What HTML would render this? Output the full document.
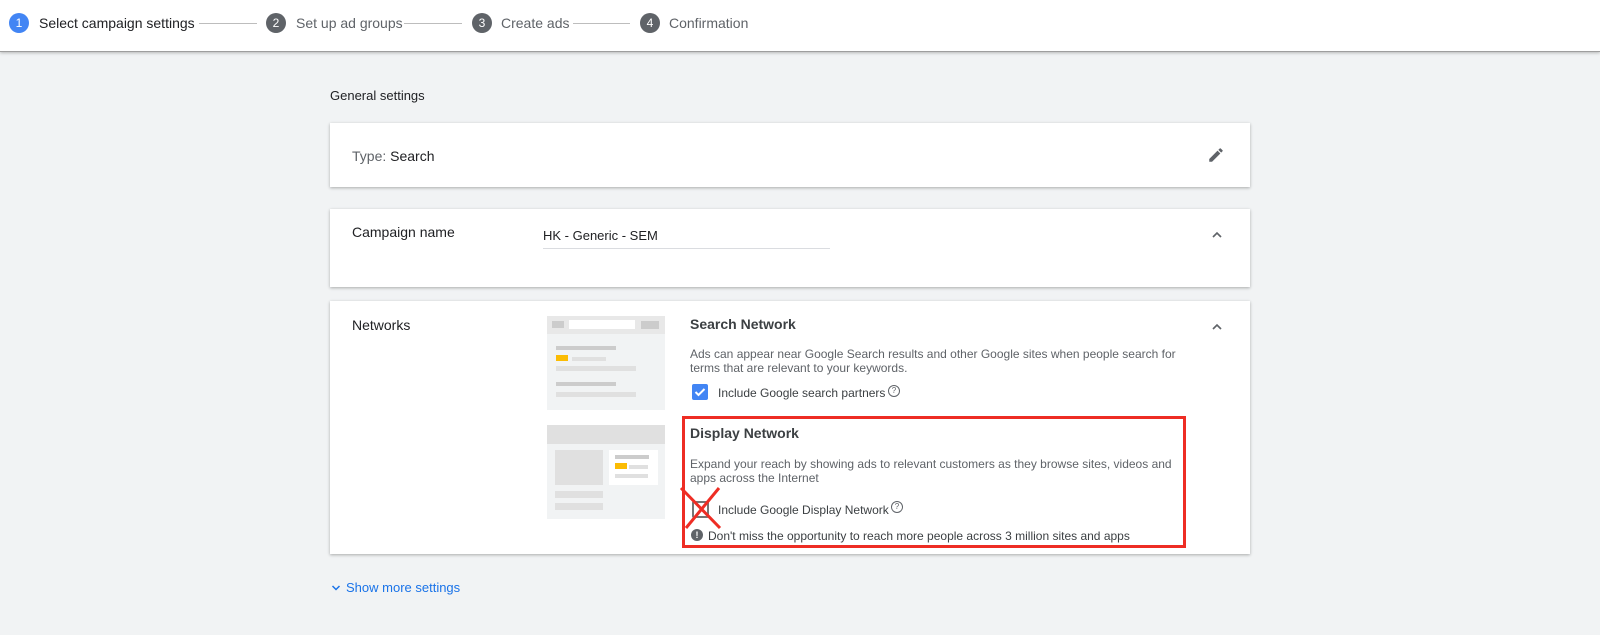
<!DOCTYPE html>
<html><head><style>
body{margin:0;width:1600px;height:635px;background:#f1f3f4;font-family:"Liberation Sans",Arial,sans-serif;position:relative;overflow:hidden;color:#202124}
.abs{position:absolute}
.hdr{left:0;top:0;width:1600px;height:51px;background:#fff;border-bottom:1px solid #9e9e9e;box-shadow:0 1px 3px rgba(0,0,0,.25)}
.num{width:20px;height:20px;border-radius:50%;color:#fff;font-size:12px;text-align:center;line-height:20px;top:13px;background:#5f6368}
.st{top:15px;font-size:14px;color:#5f6368}
.ln{top:23px;height:1px;background:#bdbdbd}
.card{left:330px;width:920px;background:#fff;box-shadow:0 1px 3px rgba(0,0,0,.3)}
.t14{font-size:14px}
.g{background:#e0e0e0}
.q{width:10px;height:10px;border:1px solid #5f6368;border-radius:50%;font-size:8px;line-height:10px;text-align:center;color:#5f6368}
</style></head><body>
<div class="abs hdr"></div>
<div class="abs num" style="left:9px;background:#4285f4">1</div>
<div class="abs st" style="left:39px;color:#202124">Select campaign settings</div>
<div class="abs ln" style="left:199px;width:58px"></div>
<div class="abs num" style="left:266px">2</div>
<div class="abs st" style="left:296px">Set up ad groups</div>
<div class="abs ln" style="left:404px;width:58px"></div>
<div class="abs num" style="left:472px">3</div>
<div class="abs st" style="left:501px">Create ads</div>
<div class="abs ln" style="left:573px;width:57px"></div>
<div class="abs num" style="left:640px">4</div>
<div class="abs st" style="left:669px">Confirmation</div>

<div class="abs t14" style="left:330px;top:88px;font-size:13px;color:#202124">General settings</div>

<div class="abs card" style="top:123px;height:64px"></div>
<div class="abs t14" style="left:352px;top:148px;color:#5f6368">Type: <span style="color:#202124">Search</span></div>
<svg class="abs" style="left:1207px;top:146px" width="18" height="18" viewBox="0 0 24 24"><path fill="#5f6368" d="M3 17.25V21h3.75L17.81 9.94l-3.75-3.75L3 17.25zM20.71 7.04a1 1 0 000-1.41l-2.34-2.34a1 1 0 00-1.41 0l-1.83 1.83 3.75 3.75 1.83-1.83z"/></svg>

<div class="abs card" style="top:209px;height:78px"></div>
<div class="abs t14" style="left:352px;top:224px">Campaign name</div>
<div class="abs" style="left:543px;top:228px;font-size:13px">HK - Generic - SEM</div>
<div class="abs" style="left:543px;top:248px;width:287px;height:1px;background:#dadce0"></div>
<svg class="abs" style="left:1209px;top:227px" width="16" height="16" viewBox="0 0 24 24"><path d="M6 15l6-6 6 6" stroke="#5f6368" stroke-width="2.5" fill="none"/></svg>

<div class="abs card" style="top:301px;height:253px"></div>
<div class="abs t14" style="left:352px;top:317px">Networks</div>
<svg class="abs" style="left:1209px;top:319px" width="16" height="16" viewBox="0 0 24 24"><path d="M6 15l6-6 6 6" stroke="#5f6368" stroke-width="2.5" fill="none"/></svg>

<div class="abs" style="left:547px;top:316px;width:118px;height:94px;background:#f1f3f4"></div>
<div class="abs" style="left:547px;top:316px;width:118px;height:18px;background:#e8e8e8"></div>
<div class="abs" style="left:569px;top:320px;width:66px;height:9px;background:#fff"></div>
<div class="abs" style="left:641px;top:321px;width:18px;height:8px;background:#ccc"></div>
<div class="abs" style="left:552px;top:321px;width:12px;height:7px;background:#ccc"></div>
<div class="abs" style="left:556px;top:346px;width:60px;height:4px;background:#ccc"></div>
<div class="abs" style="left:556px;top:355px;width:12px;height:6px;background:#fbbc04"></div>
<div class="abs g" style="left:572px;top:357px;width:34px;height:4px"></div>
<div class="abs g" style="left:556px;top:366px;width:80px;height:5px"></div>
<div class="abs" style="left:556px;top:382px;width:60px;height:4px;background:#ccc"></div>
<div class="abs g" style="left:556px;top:392px;width:80px;height:5px"></div>
<div class="abs" style="left:547px;top:425px;width:118px;height:94px;background:#f1f3f4"></div>
<div class="abs" style="left:547px;top:425px;width:118px;height:19px;background:#e0e0e0"></div>
<div class="abs" style="left:555px;top:450px;width:48px;height:35px;background:#e0e0e0"></div>
<div class="abs" style="left:609px;top:450px;width:49px;height:35px;background:#fff"></div>
<div class="abs" style="left:615px;top:455px;width:34px;height:4px;background:#ccc"></div>
<div class="abs" style="left:615px;top:463px;width:12px;height:6px;background:#fbbc04"></div>
<div class="abs g" style="left:629px;top:465px;width:19px;height:4px"></div>
<div class="abs g" style="left:615px;top:474px;width:33px;height:4px"></div>
<div class="abs g" style="left:555px;top:491px;width:48px;height:7px"></div>
<div class="abs g" style="left:555px;top:503px;width:48px;height:7px"></div>

<div class="abs" style="left:690px;top:316px;font-size:14px;font-weight:bold;color:#3c4043">Search Network</div>
<div class="abs" style="left:690px;top:347px;width:500px;font-size:12px;line-height:14px;color:#5f6368">Ads can appear near Google Search results and other Google sites when people search for terms that are relevant to your keywords.</div>
<div class="abs" style="left:692px;top:384px;width:16px;height:16px;background:#4285f4;border-radius:2px"></div>
<svg class="abs" style="left:692px;top:384px" width="16" height="16" viewBox="0 0 16 16"><path d="M3.5 8l3 3 6-6" stroke="#fff" stroke-width="2" fill="none"/></svg>
<div class="abs" style="left:718px;top:386px;font-size:12px;color:#3c4043">Include Google search partners</div>
<div class="abs q" style="left:888px;top:385px">?</div>

<div class="abs" style="left:690px;top:425px;font-size:14px;font-weight:bold;color:#3c4043">Display Network</div>
<div class="abs" style="left:690px;top:457px;width:490px;font-size:12px;line-height:14px;color:#5f6368">Expand your reach by showing ads to relevant customers as they browse sites, videos and apps across the Internet</div>
<div class="abs" style="left:692px;top:501px;width:13px;height:13px;border:2px solid #757575;border-radius:2px"></div>
<div class="abs" style="left:718px;top:503px;font-size:12px;color:#3c4043">Include Google Display Network</div>
<div class="abs q" style="left:891px;top:501px">?</div>
<div class="abs" style="left:691px;top:529px;width:12px;height:12px;border-radius:50%;background:#5f6368;color:#fff;font-size:9px;font-weight:bold;line-height:12px;text-align:center">!</div>
<div class="abs" style="left:708px;top:529px;font-size:12px;color:#3c4043">Don't miss the opportunity to reach more people across 3 million sites and apps</div>
<svg class="abs" style="left:678px;top:486px" width="46" height="46"><path d="M3 2L42 42M41 2L8 42" stroke="#ee2d24" stroke-width="3"/></svg>
<div class="abs" style="left:682px;top:416px;width:498px;height:126px;border:3.5px solid #ee2d24"></div>

<svg class="abs" style="left:330px;top:582px" width="12" height="12" viewBox="0 0 24 24"><path d="M5 8l7 7 7-7" stroke="#1a73e8" stroke-width="3" fill="none"/></svg>
<div class="abs" style="left:346px;top:580px;font-size:13px;color:#1a73e8">Show more settings</div>
</body></html>
